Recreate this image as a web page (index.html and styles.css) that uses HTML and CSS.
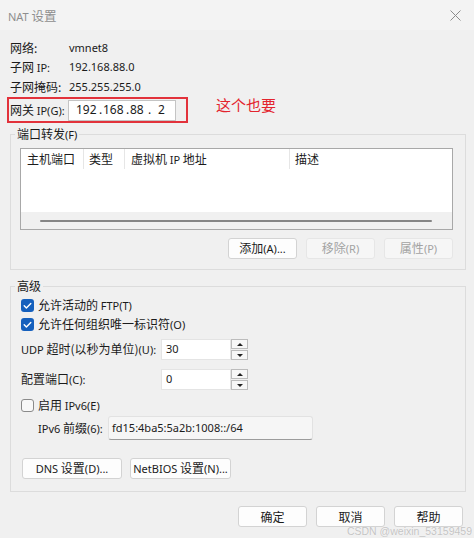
FILE: index.html
```html
<!DOCTYPE html>
<html>
<head>
<meta charset="utf-8">
<link rel="stylesheet" href="styles.css">
</head>
<body>
<div class="titlebar">
  <span class="title"><span class="l">NAT</span> 设置</span>
  <svg class="close" width="11" height="11" viewBox="0 0 11 11"><path d="M0.5 0.5L10.5 10.5M10.5 0.5L0.5 10.5" stroke="#8c8c8c" stroke-width="1" fill="none"/></svg>
</div>

<div class="info">
  <div class="row"><span class="k">网络:</span><span class="l">vmnet8</span></div>
  <div class="row"><span class="k">子网 <span class="l">IP:</span></span><span class="l">192.168.88.0</span></div>
  <div class="row"><span class="k">子网掩码:</span><span class="l">255.255.255.0</span></div>
</div>

<div class="gwline">
  <div class="gwbox">
    <span class="gwlabel">网关 <span class="l">IP(G):</span></span>
    <div class="ipinput">
      <span class="seg s1">192</span><span class="dot">.</span><span class="seg s2">168</span><span class="dot">.</span><span class="seg s3">88</span><span class="dot d3">.</span><span class="seg s4">2</span>
    </div>
  </div>
  <span class="note">这个也要</span>
</div>

<fieldset class="group g1">
  <legend>端口转发<span class="l">(F)</span></legend>
  <div class="list">
    <div class="lhead">
      <div class="col c1"><span>主机端口</span></div>
      <div class="col c2"><span>类型</span></div>
      <div class="col c3"><span>虚拟机 <span class="l">IP</span> 地址</span></div>
      <div class="col c4"><span>描述</span></div>
    </div>
    <div class="lbody"></div>
    <div class="hscroll"><div class="thumb"></div></div>
  </div>
  <div class="btnrow">
    <button class="btn"><span>添加<span class="l">(A)...</span></span></button>
    <button class="btn dis"><span>移除<span class="l">(R)</span></span></button>
    <button class="btn dis"><span>属性<span class="l">(P)</span></span></button>
  </div>
</fieldset>

<fieldset class="group g2">
  <legend>高级</legend>
  <div class="chkrow first">
    <span class="cb on"><svg width="13" height="13" viewBox="0 0 13 13"><path d="M3.2 6.8L5.4 9L9.8 4.4" stroke="#fff" stroke-width="1.4" fill="none" stroke-linecap="round" stroke-linejoin="round"/></svg></span>
    <span>允许活动的 <span class="l">FTP(T)</span></span>
  </div>
  <div class="chkrow">
    <span class="cb on"><svg width="13" height="13" viewBox="0 0 13 13"><path d="M3.2 6.8L5.4 9L9.8 4.4" stroke="#fff" stroke-width="1.4" fill="none" stroke-linecap="round" stroke-linejoin="round"/></svg></span>
    <span>允许任何组织唯一标识符<span class="l">(O)</span></span>
  </div>
  <div class="frow udp">
    <span class="flabel"><span class="l">UDP</span> 超时(以秒为单位)<span class="l">(U):</span></span>
    <div class="numinput"><span class="l">30</span></div>
    <div class="spin"><div class="sb"><span class="up"></span></div><div class="sb"><span class="down"></span></div></div>
  </div>
  <div class="frow port">
    <span class="flabel">配置端口<span class="l">(C):</span></span>
    <div class="numinput"><span class="l">0</span></div>
    <div class="spin"><div class="sb"><span class="up"></span></div><div class="sb"><span class="down"></span></div></div>
  </div>
  <div class="chkrow ipv6">
    <span class="cb off"></span>
    <span>启用 <span class="l">IPv6(E)</span></span>
  </div>
  <div class="prow">
    <span class="plabel"><span class="l">IPv6</span> 前缀<span class="l">(6):</span></span>
    <div class="pinput"><span class="l">fd15:4ba5:5a2b:1008::/64</span></div>
  </div>
  <div class="dnsrow">
    <button class="btn dns"><span><span class="l">DNS</span> 设置<span class="l">(D)...</span></span></button>
    <button class="btn nb"><span><span class="l">NetBIOS</span> 设置<span class="l">(N)...</span></span></button>
  </div>
</fieldset>

<div class="footer">
  <button class="btn"><span>确定</span></button>
  <button class="btn"><span>取消</span></button>
  <button class="btn"><span>帮助</span></button>
</div>

<div class="watermark">CSDN @weixin_53159459</div>
</body>
</html>
```

FILE: styles.css
```css
* { box-sizing: border-box; }
html, body { margin: 0; padding: 0; }
body {
  width: 474px;
  height: 538px;
  overflow: hidden;
  position: relative;
  background: #f0f0f0;
  font-family: "Noto Sans CJK SC", "Noto Sans", sans-serif;
  font-size: 12px;
  line-height: 14px;
  color: #1b1b1b;
}
.l { font-family: "Noto Sans", "Noto Sans CJK SC", sans-serif; font-size: 11px; }

.titlebar {
  height: 30px;
  background: #f3f3f3;
  display: flex;
  align-items: center;
  padding-left: 8px;
  color: #8e8e8e;
  font-size: 12.5px;
}
.title { padding-top: 2px; }
.close { margin-left: auto; margin-right: 13px; }

.info { padding: 8px 0 0 10px; }
.row { height: 19.5px; display: flex; align-items: center; }
.k { width: 59px; }

.gwline { display: flex; margin: 0.5px 0 0 7px; }
.gwbox {
  width: 181px;
  height: 26px;
  border: 2px solid #e2323b;
  display: flex;
  align-items: center;
  padding-left: 1px;
}
.gwlabel { width: 58px; }
.ipinput {
  width: 108px;
  height: 21px;
  background: #fff;
  border: 1px solid #c4c4c4;
  display: flex;
  align-items: center;
  padding-left: 7px;
  font-family: "Noto Sans", sans-serif;
  font-size: 12px;
}
.seg { display: inline-block; }
.s1, .s2 { width: 22px; }
.s3 { width: 16px; }
.dot { display: inline-block; width: 5px; text-align: center; }
.d3 { width: 7px; margin-right: 5px; }
.note {
  margin-left: 28px;
  font-size: 15px;
  line-height: 16px;
  color: #e3242e;
}

.group {
  margin: 4px 0 0 10px;
  width: 456px;
  border: 1px solid #dcdcdc;
  padding: 0 0 10px 0;
}
.group legend {
  margin-left: 4px;
  padding: 0 2px;
  line-height: 14px;
  font-size: 12px;
}

.list {
  margin: 6px 0 0 9px;
  width: 433px;
  height: 82px;
  border: 1px solid #a8a8a8;
  background: #fff;
  display: flex;
  flex-direction: column;
}
.lhead { height: 20px; display: flex; }
.col {
  height: 20px;
  display: flex;
  align-items: center;
  border-right: 1px solid #e6e6e6;
}
.c1 { width: 63px; padding-left: 6px; }
.c2 { width: 41px; padding-left: 5px; }
.c3 { width: 165px; padding-left: 6px; }
.c4 { flex: 1; padding-left: 5px; border-right: none; }
.lbody { flex: 1; }
.hscroll {
  height: 17px;
  background: #f0f0f0;
  display: flex;
  align-items: center;
  padding: 0 20px 0 19px;
}
.thumb { flex: 1; height: 2px; border-radius: 1px; background: #858585; }

.btn {
  font: inherit;
  color: #1b1b1b;
  width: 69px;
  height: 21px;
  padding: 0;
  background: #fdfdfd;
  border: 1px solid #d3d3d3;
  border-radius: 3px;
  display: flex;
  align-items: center;
  justify-content: center;
}
.btn.dis { color: #a3a3a3; background: #f6f6f6; border-color: #e6e6e6; }

.btnrow {
  margin-top: 8px;
  display: flex;
  justify-content: flex-end;
  gap: 9px;
  padding-right: 12px;
}

.g2 { margin-top: 9px; padding-bottom: 12px; }
.chkrow {
  height: 19px;
  display: flex;
  align-items: center;
  padding-left: 10px;
}
.chkrow.first { margin-top: 2.5px; }
.cb {
  width: 13px;
  height: 13px;
  border-radius: 3px;
  margin-right: 4px;
  display: flex;
}
.cb.on { background: #1560bd; }
.cb.off { background: #f8f8f8; border: 1px solid #8a8a8a; }

.frow {
  height: 21px;
  display: flex;
  align-items: center;
  padding-left: 10px;
}
.udp { margin-top: 5.5px; }
.port { margin-top: 9px; }
.flabel { width: 140px; }
.numinput {
  width: 70px;
  height: 21px;
  background: #fff;
  border: 1px solid #e4e4e4;
  padding: 1px 0 0 4px;
}
.spin { width: 17px; height: 21px; display: flex; flex-direction: column; gap: 1px; }
.sb {
  flex: 1;
  background: #f7f7f7;
  border: 1px solid #bcbcbc;
  display: flex;
  align-items: center;
  justify-content: center;
}
.up { width: 0; height: 0; border-left: 3px solid transparent; border-right: 3px solid transparent; border-bottom: 3px solid #222; }
.down { width: 0; height: 0; border-left: 3px solid transparent; border-right: 3px solid transparent; border-top: 3px solid #222; }

.ipv6 { margin-top: 5.5px; }
.prow {
  margin-top: 1.5px;
  height: 24px;
  display: flex;
  align-items: center;
  padding-left: 27px;
}
.plabel { width: 70px; }
.pinput {
  width: 205px;
  height: 24px;
  background: #f6f6f6;
  border: 1px solid #e2e2e2;
  border-bottom: 1px solid #9c9c9c;
  border-radius: 3px;
  display: flex;
  align-items: center;
  padding-left: 3px;
}

.dnsrow {
  margin-top: 18px;
  display: flex;
  gap: 8px;
  padding-left: 11px;
}
.dns { width: 100px; }
.nb { width: 101px; }

.footer {
  margin-top: 14px;
  display: flex;
  justify-content: flex-end;
  gap: 9px;
  padding-right: 11px;
}

.watermark {
  position: absolute;
  right: 2px;
  bottom: 1px;
  font-family: "Liberation Sans", sans-serif;
  font-size: 10.5px;
  line-height: 12px;
  color: #c4c4c4;
  text-shadow: 0 0 1px #fff;
}
```
